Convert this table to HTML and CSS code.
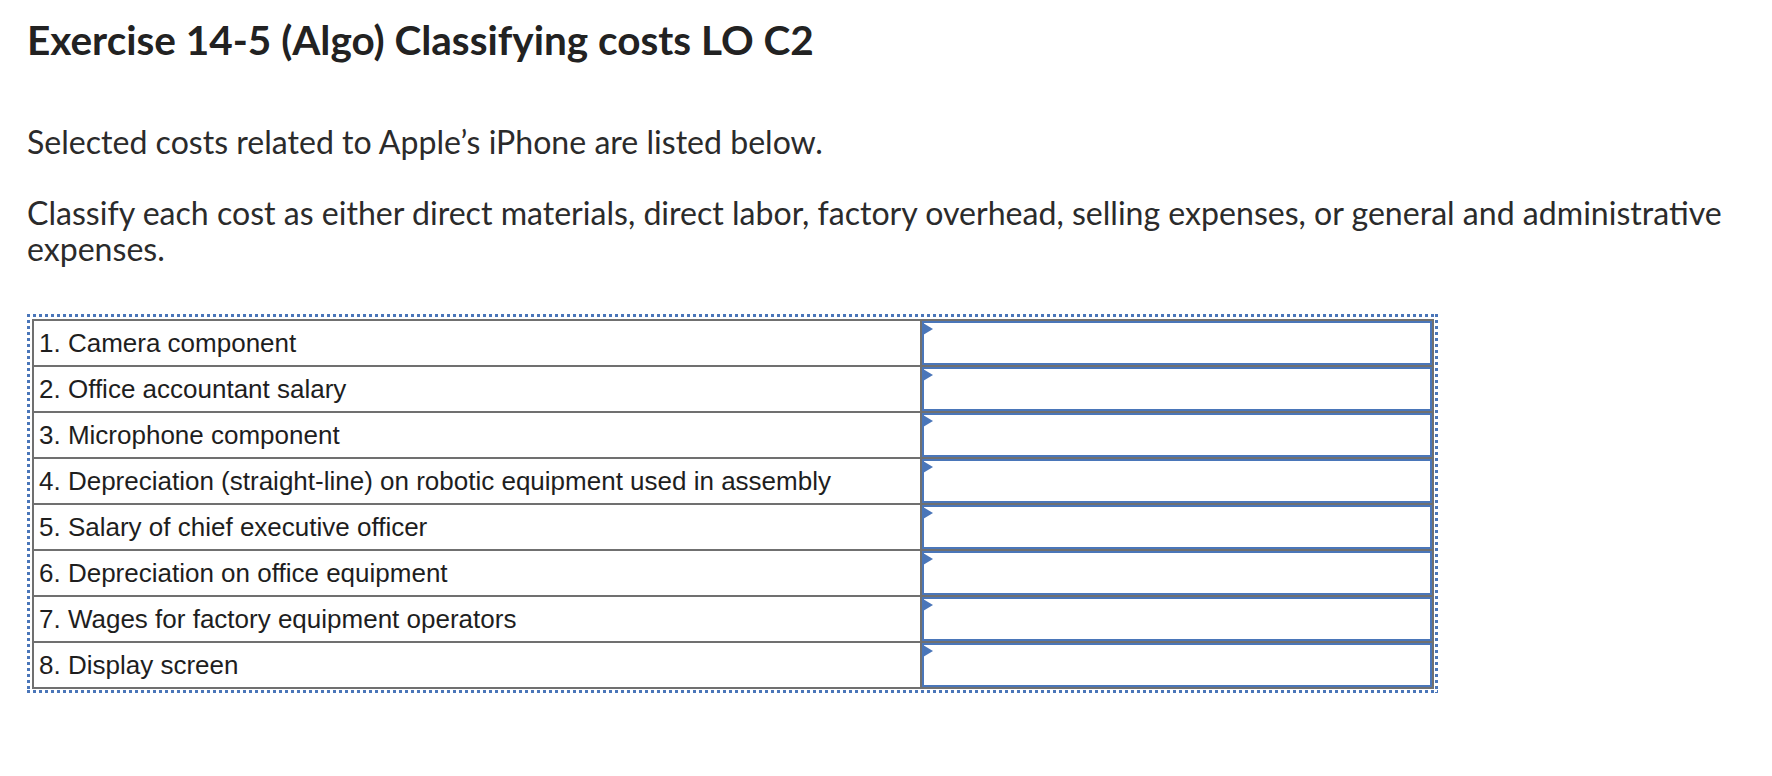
FILE: index.html
```html
<!DOCTYPE html>
<html lang="en">
<head>
<meta charset="utf-8">
<title>Exercise 14-5 (Algo) Classifying costs LO C2</title>
<link rel="stylesheet" href="styles.css">
</head>
<body>
<main class="page">
  <h1 class="title">Exercise 14-5 (Algo) Classifying costs LO C2</h1>
  <p class="intro">Selected costs related to Apple’s iPhone are listed below.</p>
  <p class="intro">Classify each cost as either direct materials, direct labor, factory overhead, selling expenses, or general and administrative expenses.</p>
  <div class="frame">
    <div class="costs">
      <div class="label">1. Camera component</div>
      <div class="answer"><div class="field"><span class="flag"></span></div></div>
      <div class="label">2. Office accountant salary</div>
      <div class="answer"><div class="field"><span class="flag"></span></div></div>
      <div class="label">3. Microphone component</div>
      <div class="answer"><div class="field"><span class="flag"></span></div></div>
      <div class="label">4. Depreciation (straight-line) on robotic equipment used in assembly</div>
      <div class="answer"><div class="field"><span class="flag"></span></div></div>
      <div class="label">5. Salary of chief executive officer</div>
      <div class="answer"><div class="field"><span class="flag"></span></div></div>
      <div class="label">6. Depreciation on office equipment</div>
      <div class="answer"><div class="field"><span class="flag"></span></div></div>
      <div class="label">7. Wages for factory equipment operators</div>
      <div class="answer"><div class="field"><span class="flag"></span></div></div>
      <div class="label">8. Display screen</div>
      <div class="answer"><div class="field"><span class="flag"></span></div></div>
    </div>
  </div>
</main>
</body>
</html>
```

FILE: styles.css
```css
html, body {
  margin: 0;
  padding: 0;
  background: #ffffff;
}

.page {
  padding: 16px 0 0 27px;
  font-family: "Lato", "Open Sans", sans-serif;
  color: #2b2b2b;
}

.title {
  margin: 0 0 60px 0;
  font-size: 40.5px;
  line-height: 48px;
  font-weight: 700;
  color: #222222;
}

.intro {
  margin: 0 0 35px 0;
  font-size: 32.1px;
  line-height: 36px;
  font-weight: 400;
  max-width: 1735px;
}

.frame {
  width: fit-content;
  padding: 5px 4px 4px 5px;
  margin-top: 47px;
  background:
    repeating-linear-gradient(90deg, #4a76b9 0 3px, transparent 3px 6px) top left / 100% 3px no-repeat,
    repeating-linear-gradient(90deg, #4a76b9 0 3px, transparent 3px 6px) bottom left / 100% 3px no-repeat,
    repeating-linear-gradient(180deg, #4a76b9 0 3px, transparent 3px 6px) top left / 3px 100% no-repeat,
    repeating-linear-gradient(180deg, #4a76b9 0 3px, transparent 3px 6px) top right / 3px 100% no-repeat;
}

.costs {
  display: grid;
  grid-template-columns: 886px 510px;
  grid-auto-rows: 44px;
  gap: 2px;
  border: 2px solid #707070;
  background: #707070;
}

.label {
  background: #ffffff;
  padding-left: 5px;
  display: flex;
  align-items: center;
  font-family: "Liberation Sans", Arial, sans-serif;
  font-size: 26px;
  color: #1e1e1e;
  white-space: nowrap;
}

.answer {
  background: #ffffff;
}

.field {
  position: relative;
  box-sizing: border-box;
  height: 44px;
  border: 2px solid #4a76b9;
}

.flag {
  position: absolute;
  left: -1px;
  top: 0;
  width: 0;
  height: 0;
  border-left: 10px solid #4a76b9;
  border-top: 6px solid transparent;
  border-bottom: 6px solid transparent;
}
```
